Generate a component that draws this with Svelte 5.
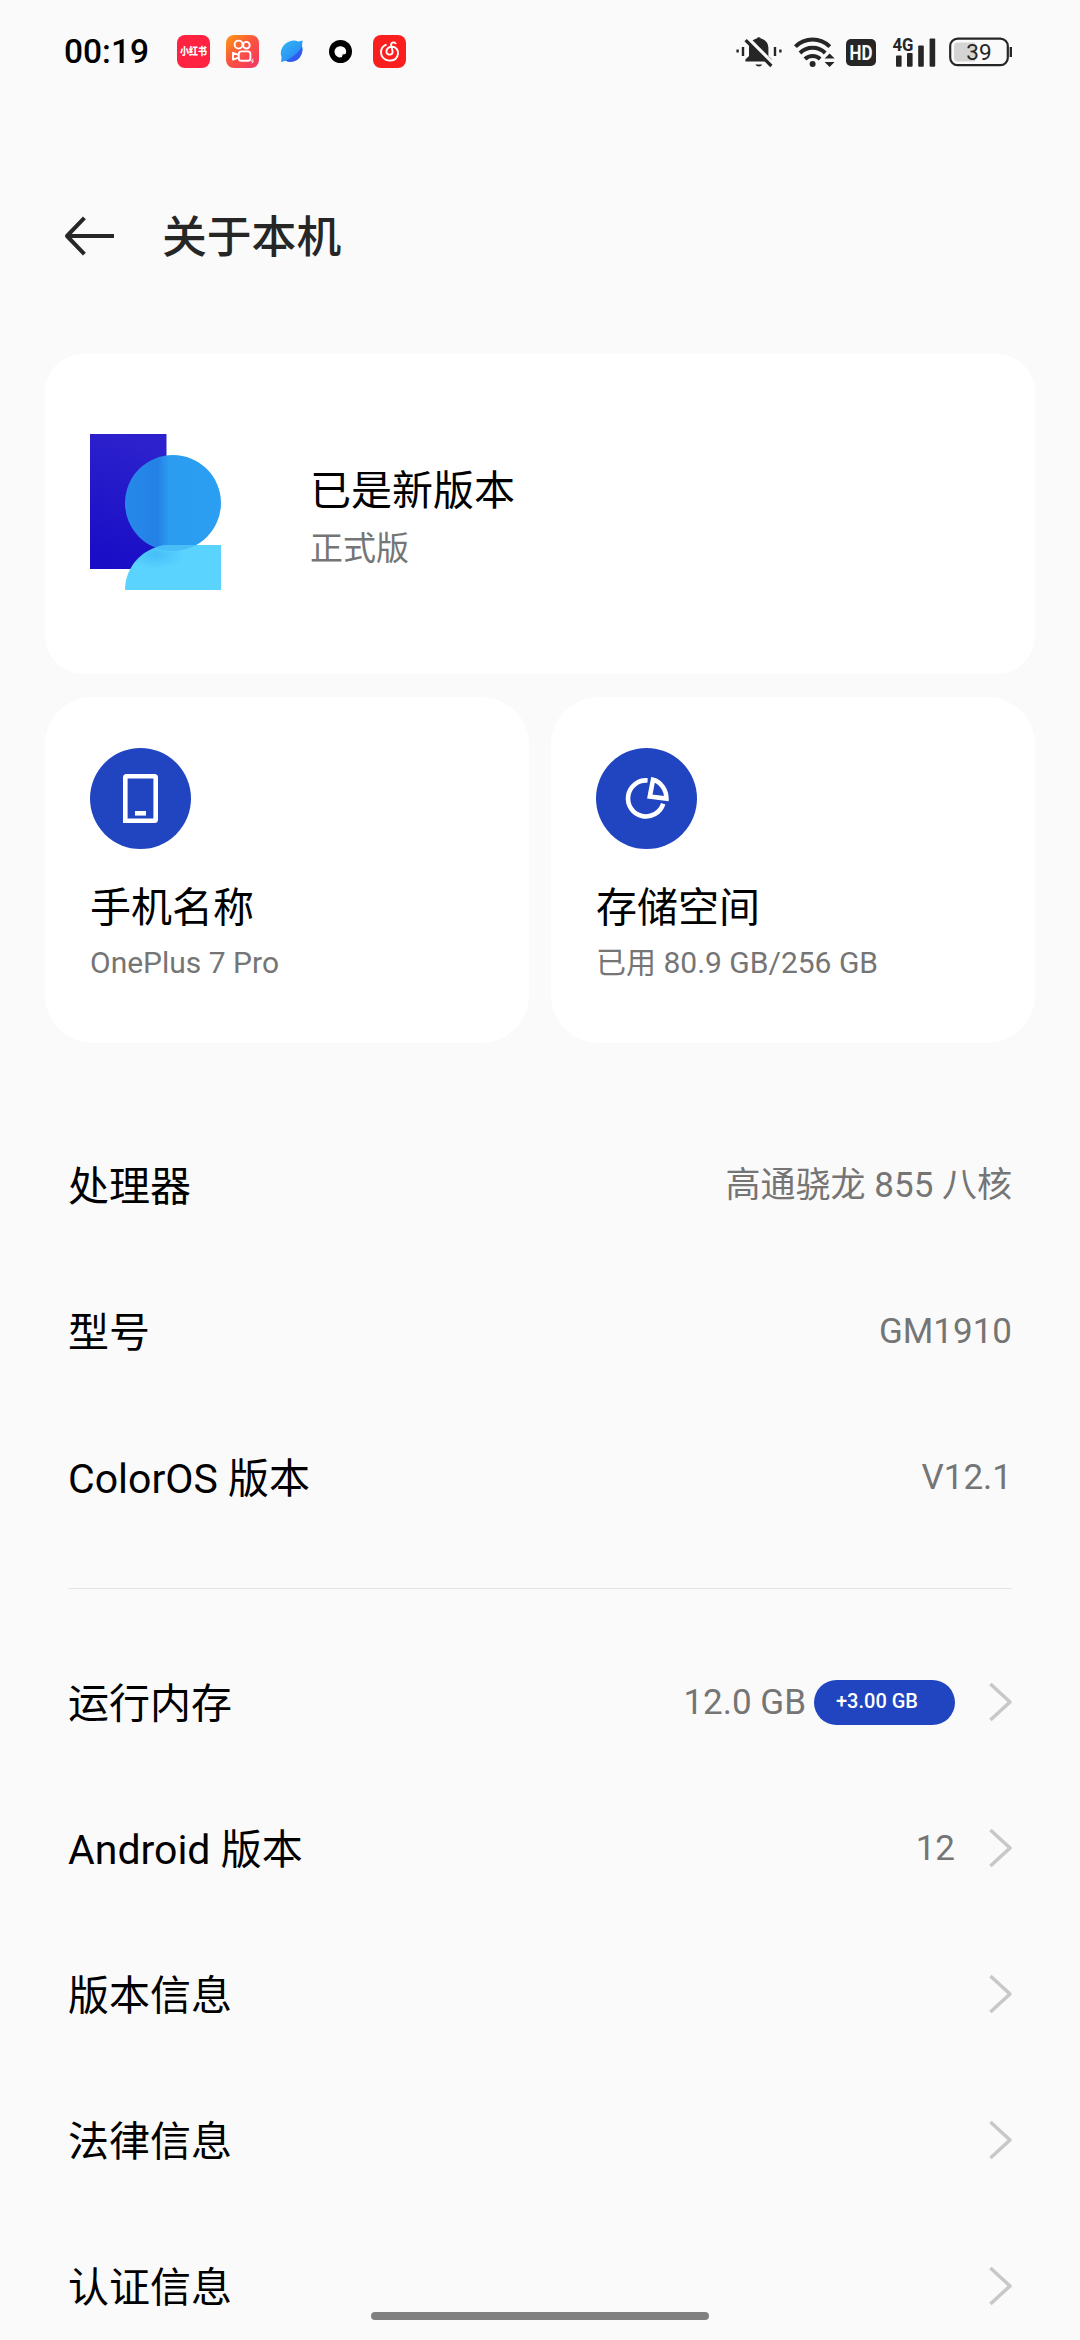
<script lang="ts">
  type Row = {
    label: string;
    value?: string;
    badge?: string;
    link?: boolean;
  };

  const specs: Row[] = [
    { label: '处理器', value: '高通骁龙 855 八核' },
    { label: '型号', value: 'GM1910' },
    { label: 'ColorOS 版本', value: 'V12.1' },
  ];

  const details: Row[] = [
    { label: '运行内存', value: '12.0 GB', badge: '+3.00 GB', link: true },
    { label: 'Android 版本', value: '12', link: true },
    { label: '版本信息', link: true },
    { label: '法律信息', link: true },
    { label: '认证信息', link: true },
  ];
</script>

{#snippet listRow(row: Row)}
  <li class="row">
    <span class="label">{row.label}</span>
    {#if row.value}<span class="value">{row.value}</span>{/if}
    {#if row.badge}<span class="badge">{row.badge}</span>{/if}
    {#if row.link}
      <svg class="chevron" viewBox="0 0 24 40" width="24" height="40" fill="none" stroke="#c8c8c8" stroke-width="3.6" stroke-linejoin="round">
        <path d="M2.4 2 L22 20 L2.4 38" />
      </svg>
    {/if}
  </li>
{/snippet}

<div class="screen">
  <div class="status-bar">
    <span class="clock">00:19</span>
    <div class="notifications">
      <!-- xiaohongshu -->
      <svg viewBox="0 0 33 33" width="33" height="33">
        <rect width="33" height="33" rx="8" fill="#ff2341" />
        <text class="book" x="16.5" y="20.2" text-anchor="middle" textLength="27" lengthAdjust="spacingAndGlyphs">小红书</text>
      </svg>
      <!-- kuaishou -->
      <svg viewBox="0 0 33 33" width="33" height="33">
        <defs>
          <linearGradient id="kwai" x1="0" y1="0" x2="0.8" y2="0.9">
            <stop offset="0" stop-color="#ff9a10" />
            <stop offset="0.55" stop-color="#fa5440" />
            <stop offset="1" stop-color="#f63c5c" />
          </linearGradient>
        </defs>
        <rect width="33" height="33" rx="8" fill="url(#kwai)" />
        <g fill="none" stroke="#fff" stroke-width="1.9" stroke-linejoin="round">
          <circle cx="12.6" cy="9.6" r="4" />
          <circle cx="20.4" cy="10.2" r="3.3" />
          <rect x="12.8" y="16.4" width="11.6" height="9.4" rx="2.6" />
          <path d="M12.6 19.8 L7 17.8 V24.6 L12.6 22.6" />
        </g>
        <path d="M27.4 23.6 L25.4 26.2 H27.4 L25.8 28.4" fill="none" stroke="#fff" stroke-width="0.9" />
      </svg>
      <!-- browser planet -->
      <svg viewBox="0 0 33 33" width="33" height="33">
        <defs>
          <linearGradient id="planet" x1="0" y1="0" x2="0.8" y2="1">
            <stop offset="0" stop-color="#35b7f4" />
            <stop offset="1" stop-color="#2485f5" />
          </linearGradient>
        </defs>
        <path d="M15 6.2 C18 5 21 5.4 23.2 6.6 L27.6 5.6 L27 11 C29 17 25 26.6 16 26.8 C13.4 27 11.6 26.2 10.6 25.8 L6 27 L6.6 22.6 C4 16 8 8 15 6.2 Z" fill="url(#planet)" />
        <path d="M27 11.4 C28.6 17.5 25 26.4 16 26.8 C13.6 26.9 11.8 26.2 10.6 25.7 C17 23 23 18 27 11.4 Z" fill="#345bf0" />
      </svg>
      <svg viewBox="0 0 33 33" width="33" height="33">
        <circle cx="16.5" cy="16.5" r="11.5" fill="#000" />
        <path d="M16.8 11.2 A5.4 5.4 0 0 1 22.2 16.6 L21.6 19 L18.6 19.4 L18 22 A5.6 5.6 0 1 1 16.8 11.2 Z" fill="#fff" />
      </svg>
      <!-- netease music -->
      <svg viewBox="0 0 33 33" width="33" height="33">
        <rect width="33" height="33" rx="8" fill="#f91f1f" />
        <path
          d="M22.6 8.4 C20.8 6.6 17.6 7.4 18.2 10.4 L19.6 16.4 C20.3 20.4 13.6 21 13.4 16.6 C13.4 13.6 16 11.7 19.2 11.8 C23.4 12.2 25.4 15.2 25 18.8 C24.4 23.4 20.6 25.6 16.4 25.6 C11.6 25.4 8 22 8 17.4 C8 13.8 10 11 12.8 9.8"
          fill="none"
          stroke="#fff"
          stroke-width="1.9"
          stroke-linecap="round"
        />
      </svg>
    </div>

    <div class="system-icons">
      <!-- muted bell -->
      <svg viewBox="0 0 46 32" width="46" height="32" fill="#262626">
        <path d="M9.4 25.4 V23.6 L13 20 V12 C13 7 16.4 3.6 20.8 2.6 A2.2 2.2 0 0 1 24.8 2.6 C29.4 3.6 32.4 7 32.4 12 V20 L36 23.6 V25.4 Z" />
        <path d="M19.4 28.4 H26.2 A3.6 3.2 0 0 1 19.4 28.4 Z" />
        <path d="M12.4 3 L39.2 29.8" stroke="#fafafa" stroke-width="4" />
        <path d="M9.6 4.2 L35.4 30" stroke="#262626" stroke-width="3.2" />
        <path d="M1.6 13.5 V16.5 M7 11 V20 M39 11 V20 M44.4 13.5 V16.5" stroke="#262626" stroke-width="2.4" />
      </svg>
      <svg class="wifi" viewBox="0 0 41 32" width="41" height="32">
        <g fill="none" stroke="#262626" stroke-width="4">
          <path d="M1.4 10.6 A24.4 24.4 0 0 1 35.8 10.6" />
          <path d="M6 17 A18 18 0 0 1 31.2 17" />
          <path d="M11 23 A11 11 0 0 1 26.2 23" />
        </g>
        <circle cx="18.6" cy="28" r="3" fill="#262626" />
        <path d="M30.6 22.6 L35.6 17.6 L40.6 22.6 Z M30.6 26 L35.6 31 L40.6 26 Z" fill="#262626" />
      </svg>
      <svg class="hd" viewBox="0 0 30 27" width="30" height="27">
        <rect width="30" height="27" rx="5" fill="#262626" />
        <text class="hd-text" x="15" y="21" text-anchor="middle" textLength="23" lengthAdjust="spacingAndGlyphs">HD</text>
      </svg>
      <svg class="signal" viewBox="0 0 44 34" width="44" height="34" fill="#262626">
        <text class="net" x="0.4" y="16" textLength="21" lengthAdjust="spacingAndGlyphs">4G</text>
        <rect x="4" y="20.4" width="5.6" height="11.4" rx="1" />
        <rect x="15" y="18" width="5.6" height="13.8" rx="1" />
        <rect x="26.2" y="10.4" width="5.6" height="21.4" rx="1" />
        <rect x="37.6" y="3.4" width="5.6" height="28.4" rx="1" />
      </svg>
      <svg class="battery" viewBox="0 0 64 30" width="64" height="30">
        <rect x="1.2" y="1.6" width="57.6" height="26.6" rx="7.5" fill="none" stroke="#262626" stroke-width="2.2" />
        <path d="M9 5.4 H26 V24.4 H9 A4 4 0 0 1 5 20.4 V9.4 A4 4 0 0 1 9 5.4 Z" fill="#d4d4d4" />
        <path d="M61.8 10 V20" stroke="#262626" stroke-width="2.4" />
        <text class="charge" x="30" y="23" text-anchor="middle">39</text>
      </svg>
    </div>
  </div>

  <header class="title-bar">
    <svg viewBox="0 0 50 40" width="50" height="40" fill="none" stroke="#262626" stroke-width="4">
      <path d="M20.4 1.8 L3 20 L20.4 38.2" stroke-linejoin="round" />
      <path d="M3 20 H50" />
    </svg>
    <h1>关于本机</h1>
  </header>

  <main>
    <section class="card version">
      <svg viewBox="0 0 132 158" width="132" height="158">
        <defs>
          <linearGradient id="slab" x1="0.3" y1="0" x2="0.1" y2="1">
            <stop offset="0" stop-color="#2c21cc" />
            <stop offset="1" stop-color="#180cc6" />
          </linearGradient>
          <linearGradient id="head" x1="0" y1="0" x2="1" y2="0">
            <stop offset="0" stop-color="#268aea" />
            <stop offset="0.34" stop-color="#2480e6" />
            <stop offset="0.46" stop-color="#2b9cf0" />
            <stop offset="1" stop-color="#2b9ff2" />
          </linearGradient>
          <radialGradient id="body" cx="0.32" cy="0.22" r="0.3">
            <stop offset="0" stop-color="#45bdf7" />
            <stop offset="1" stop-color="#5ad3ff" />
          </radialGradient>
          <clipPath id="headClip"><circle cx="83" cy="69" r="48" /></clipPath>
        </defs>
        <rect x="0" y="0" width="76.5" height="135" fill="url(#slab)" />
        <circle cx="83" cy="69" r="48" fill="url(#head)" />
        <path d="M35 156 A45 45 0 0 1 80 111 H131 V156 Z" fill="url(#body)" />
        <path d="M35 156 A45 45 0 0 1 80 111 H131 V156 Z" fill="#48bdf6" clip-path="url(#headClip)" />
      </svg>
      <div class="version-text">
        <h2>已是新版本</h2>
        <p>正式版</p>
      </div>
    </section>

    <div class="tiles">
      <section class="card tile">
        <svg viewBox="0 0 101 101" width="101" height="101">
          <circle cx="50.5" cy="50.5" r="50.5" fill="#2145c0" />
          <path d="M33 75 V29.5 A3.5 3.5 0 0 1 36.5 26 H64.5 A3.5 3.5 0 0 1 68 29.5 V71.5 A3.5 3.5 0 0 1 64.5 75 Z M37.6 30.6 V70.4 H63.4 V30.6 Z" fill="#fff" fill-rule="evenodd" />
          <rect x="45" y="63" width="11" height="4.6" fill="#fff" />
        </svg>
        <h2>手机名称</h2>
        <p>OnePlus 7 Pro</p>
      </section>
      <section class="card tile">
        <svg viewBox="0 0 101 101" width="101" height="101" fill="none" stroke="#fff" stroke-width="4.6">
          <circle cx="50.5" cy="50.5" r="50.5" fill="#2145c0" stroke="none" />
          <path d="M51.6 32.5 A18 18 0 1 0 67.2 55.8" />
          <path d="M57 31.8 C64.6 33.8 70.4 41.4 70.4 50.6 L53.8 48.6 Z" />
        </svg>
        <h2>存储空间</h2>
        <p>已用 80.9 GB/256 GB</p>
      </section>
    </div>

    <ul class="list specs">
      {#each specs as row (row.label)}
        {@render listRow(row)}
      {/each}
    </ul>
    <hr />
    <ul class="list details">
      {#each details as row (row.label)}
        {@render listRow(row)}
      {/each}
    </ul>
  </main>

  <div class="home-indicator"></div>
</div>

<style>
  :global(body) {
    margin: 0;
    background: #fafafa;
  }

  .screen {
    position: relative;
    width: 1080px;
    height: 2340px;
    overflow: hidden;
    background: #fafafa;
    color: #000;
    font-family: Roboto, 'Noto Sans CJK SC', sans-serif;
  }

  svg {
    display: block;
    flex: none;
    overflow: visible;
  }

  h1,
  h2,
  p,
  ul {
    margin: 0;
    padding: 0;
    font-weight: 400;
  }

  .status-bar {
    display: flex;
    align-items: center;
    height: 103px;
    padding: 0 67px 0 64px;
  }

  .clock {
    width: 113px;
    font-size: 33.5px;
    font-weight: 500;
    line-height: 40px;
  }

  .notifications {
    display: flex;
    gap: 16px;
  }

  .book {
    font-family: 'Noto Sans CJK SC', sans-serif;
    font-size: 10px;
    font-weight: 900;
    fill: #fff;
  }

  .system-icons {
    display: flex;
    align-items: center;
    margin-left: auto;
  }

  .wifi {
    margin-left: 12px;
  }

  .hd {
    margin: 2px 0 0 11px;
  }

  .hd-text {
    fill: #fafafa;
    font-size: 21px;
    font-weight: 700;
  }

  .signal {
    margin-left: 16px;
  }

  .net {
    font-size: 18.5px;
    font-weight: 700;
  }

  .battery {
    margin-left: 13px;
  }

  .charge {
    font-size: 22.5px;
    font-weight: 400;
    fill: #262626;
  }

  .title-bar {
    display: flex;
    align-items: center;
    gap: 48px;
    height: 66px;
    margin-top: 100px;
    padding: 0 64px;
  }

  h1 {
    padding-top: 3px;
    color: #262626;
    font-size: 44.8px;
    font-weight: 500;
    line-height: 63px;
  }

  main {
    padding: 85px 45px 0;
  }

  .card {
    box-sizing: border-box;
    border-radius: 38px;
    background: #fff;
  }

  .version {
    display: flex;
    align-items: flex-start;
    height: 320px;
    padding: 80px 45px 0;
    gap: 88px;
  }

  h2 {
    font-size: 41px;
    line-height: 60px;
  }

  .version-text {
    padding-top: 27px;
  }

  .version-text p {
    margin-top: 2px;
    color: #757575;
    font-size: 33px;
    line-height: 52px;
  }

  .tiles {
    display: flex;
    gap: 22px;
    margin-top: 23px;
  }

  .tile {
    flex: 1;
    height: 346px;
    padding: 51px 45px 0;
    border-radius: 48px;
  }

  .tile h2 {
    margin-top: 29px;
  }

  .tile p {
    color: #757575;
    font-size: 30px;
    line-height: 50px;
  }

  .list {
    list-style: none;
  }

  .specs {
    margin-top: 70px;
  }

  .row {
    display: flex;
    align-items: center;
    height: 146px;
    padding: 0 23px;
  }

  .label {
    flex: 1;
    padding-top: 1px;
    font-size: 41px;
    line-height: 60px;
  }

  .value {
    padding-bottom: 1px;
    color: #757575;
    font-size: 35px;
    line-height: 50px;
  }

  .details .label {
    padding-top: 4px;
  }

  .details .value {
    padding: 1px 0 0;
  }

  .badge {
    box-sizing: border-box;
    width: 141px;
    height: 45px;
    margin-left: 8px;
    padding-left: 22px;
    border-radius: 23px;
    background: #2145c0;
    color: #fff;
    font-size: 20px;
    font-weight: 500;
    line-height: 43px;
  }

  .chevron {
    margin-left: 33px;
  }

  hr {
    height: 1px;
    margin: 37px 23px 40px;
    border: 0;
    background: #e2e2e2;
  }

  .home-indicator {
    position: absolute;
    bottom: 20px;
    left: 371px;
    width: 338px;
    height: 8px;
    border-radius: 4px;
    background: #808080;
  }
</style>
